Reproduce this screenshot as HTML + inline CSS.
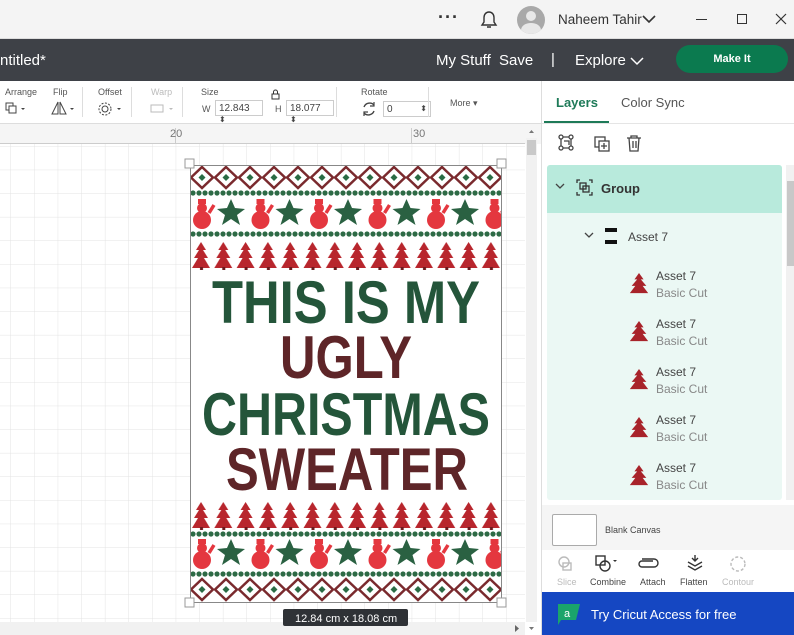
<!DOCTYPE html>
<html><head><meta charset="utf-8"><style>
*{margin:0;padding:0;box-sizing:border-box}
body{width:794px;height:635px;overflow:hidden;position:relative;font-family:"Liberation Sans",sans-serif;background:#fff;color:#333}
.abs{position:absolute}
.top{left:0;top:0;width:794px;height:39px;background:#f4f4f4;border-bottom:1px solid #ddd}
.hdr{left:0;top:39px;width:794px;height:42px;background:#3e4147;color:#fff}
.tb{left:0;top:81px;width:541px;height:43px;background:#fff;border-bottom:1px solid #ddd;font-size:9px;color:#555}
.lbl{position:absolute;font-size:9px;color:#555}
.inp{position:absolute;border:1px solid #ccc;height:16px;font-size:10px;padding:2px 3px;color:#444;background:#fff}
.rp{left:541px;top:81px;width:253px;height:554px;background:#fff;border-left:1px solid #ddd}
.an{position:absolute;left:114px;font-size:12px;color:#444;line-height:17px}
.an span{color:#888}
</style></head><body>
<div class="abs top">
 <div class="abs" style="left:438px;top:10px;font-size:18px;font-weight:bold;letter-spacing:1px;color:#333;line-height:14px">···</div>
 <svg class="abs" style="left:480px;top:10px" width="18" height="20" viewBox="0 0 18 20"><path d="M9 2c-3 0-5 2.5-5 5.5V12l-2 3h14l-2-3V7.5C14 4.5 12 2 9 2z M7 17h4" fill="none" stroke="#333" stroke-width="1.4"/></svg>
 <div class="abs" style="left:517px;top:6px;width:28px;height:28px;border-radius:50%;background:#a9a9a9;overflow:hidden"><div class="abs" style="left:9px;top:5px;width:10px;height:10px;border-radius:50%;background:#e8e8e8"></div><div class="abs" style="left:4px;top:17px;width:20px;height:14px;border-radius:50%;background:#e8e8e8"></div></div>
 <div class="abs" style="left:558px;top:12px;font-size:13.5px;color:#333">Naheem Tahir</div>
 <svg class="abs" style="left:642px;top:14px" width="14" height="10"><path d="M1 2l6 6 6-6" fill="none" stroke="#333" stroke-width="1.6"/></svg>
 <div class="abs" style="left:696px;top:19px;width:11px;height:1px;background:#333"></div>
 <div class="abs" style="left:737px;top:14px;width:10px;height:10px;border:1px solid #333"></div>
 <svg class="abs" style="left:775px;top:13px" width="12" height="12"><path d="M1 1l10 10M11 1L1 11" stroke="#333" stroke-width="1.2"/></svg>
</div>
<div class="abs hdr">
 <div class="abs" style="left:0;top:13px;font-size:15px">ntitled*</div>
 <div class="abs" style="left:436px;top:13px;font-size:15px">My Stuff</div>
 <div class="abs" style="left:499px;top:13px;font-size:15px">Save</div>
 <div class="abs" style="left:551px;top:12px;font-size:15px">|</div>
 <div class="abs" style="left:575px;top:13px;font-size:15px">Explore</div>
 <svg class="abs" style="left:630px;top:17px" width="14" height="10"><path d="M1 2l6 6 6-6" fill="none" stroke="#fff" stroke-width="1.5"/></svg>
 <div class="abs" style="left:676px;top:6px;width:112px;height:28px;border-radius:14px;background:#0b7a4f;font-size:11px;font-weight:bold;text-align:center;line-height:28px">Make It</div>
</div>
<div class="abs tb">
 <div class="lbl" style="left:5px;top:6px">Arrange</div>
 <div class="lbl" style="left:53px;top:6px">Flip</div>
 <div class="lbl" style="left:98px;top:6px">Offset</div>
 <div class="lbl" style="left:151px;top:6px;color:#bbb">Warp</div>
 <div class="lbl" style="left:201px;top:6px">Size</div>
 <div class="lbl" style="left:361px;top:6px">Rotate</div>
 <div class="lbl" style="left:450px;top:17px">More ▾</div>
 <svg class="abs" style="left:5px;top:21px" width="24" height="14"><rect x="1" y="1" width="7" height="7" fill="none" stroke="#444"/><rect x="4" y="4" width="7" height="7" fill="#fff" stroke="#444"/><path d="M16 6l2 2 2-2z" fill="#444"/></svg>
 <svg class="abs" style="left:51px;top:20px" width="24" height="15"><path d="M7 1L1 13h6zM9 1l6 12H9z" fill="none" stroke="#444"/><path d="M19 7l2 2 2-2z" fill="#444"/></svg>
 <svg class="abs" style="left:97px;top:20px" width="26" height="16"><circle cx="8" cy="8" r="6" fill="none" stroke="#444" stroke-dasharray="2 1.5"/><circle cx="8" cy="8" r="3" fill="none" stroke="#444"/><path d="M20 7l2 2 2-2z" fill="#444"/></svg>
 <svg class="abs" style="left:150px;top:22px" width="26" height="12"><rect x="1" y="2" width="12" height="7" fill="none" stroke="#bbb"/><path d="M19 5l2 2 2-2z" fill="#bbb"/></svg>
 <div class="lbl" style="left:202px;top:23px">W</div>
 <div class="inp" style="left:215px;top:19px;width:48px">12.843 <span style="font-size:8px">⬍</span></div>
 <div class="lbl" style="left:275px;top:23px">H</div>
 <div class="inp" style="left:286px;top:19px;width:48px">18.077 <span style="font-size:8px">⬍</span></div>
 <svg class="abs" style="left:270px;top:8px" width="12" height="11"><rect x="2" y="5" width="7" height="5" fill="none" stroke="#333"/><path d="M3.5 5V3a2 2 0 014 0v2" fill="none" stroke="#333"/></svg>
 <svg class="abs" style="left:361px;top:20px" width="16" height="16"><path d="M3 6a6 6 0 0110-2M13 10a6 6 0 01-10 2" fill="none" stroke="#444" stroke-width="1.4"/><path d="M13 1v4h-4M3 15v-4h4" fill="none" stroke="#444" stroke-width="1.2"/></svg>
 <div class="inp" style="left:383px;top:20px;width:48px">0 <span style="float:right;font-size:8px">⬍</span></div>
 <div class="abs" style="left:82px;top:6px;width:1px;height:30px;background:#ddd"></div>
 <div class="abs" style="left:131px;top:6px;width:1px;height:30px;background:#ddd"></div>
 <div class="abs" style="left:182px;top:6px;width:1px;height:30px;background:#ddd"></div>
 <div class="abs" style="left:336px;top:6px;width:1px;height:30px;background:#ddd"></div>
 <div class="abs" style="left:428px;top:6px;width:1px;height:30px;background:#ddd"></div>
</div>
<svg class="abs" style="left:0;top:124px" width="541" height="511" viewBox="0 124 541 511">
 <defs>
  <pattern id="grid" x="11" y="5" width="23.6" height="23.6" patternUnits="userSpaceOnUse"><path d="M23.6 0V23.6H0" fill="none" stroke="#e3e3e3" stroke-width="1"/></pattern>
  <pattern id="dia" x="0" y="0" width="24" height="25" patternUnits="userSpaceOnUse"><path d="M12 2L23 12.5 12 23 1 12.5z" fill="none" stroke="#7a2a2e" stroke-width="2.5"/><path d="M12 9l3.5 3.5L12 16l-3.5-3.5z" fill="#2a6b44"/></pattern>
  <pattern id="dot" x="0" y="0" width="6" height="6" patternUnits="userSpaceOnUse"><circle cx="3" cy="3" r="2.6" fill="#2d6a45"/></pattern>
  <pattern id="snow" x="0" y="0" width="58.5" height="34" patternUnits="userSpaceOnUse">
   <circle cx="12" cy="23" r="9" fill="#e4373f"/><circle cx="12" cy="11" r="5" fill="#e4373f"/><rect x="8" y="2" width="8" height="5" fill="#e4373f"/><path d="M19 16l5-8" stroke="#e4373f" stroke-width="3.5"/>
   <path d="M41 2l4 9 10 1-8 6 3 10-9-6-9 6 3-10-8-6 10-1z" fill="#2a6142"/>
  </pattern>
  <pattern id="tree" x="0" y="0" width="22.3" height="31" patternUnits="userSpaceOnUse"><path d="M11 2L6 10h3L4 18h4L2 28h18l-6-10h4l-5-8h3z" fill="#b8262d"/><rect x="10" y="27" width="3" height="3" fill="#6b1a1e"/></pattern>
 </defs>
 <rect x="0" y="124" width="541" height="20" fill="#f5f5f5"/>
 <rect x="0" y="144" width="541" height="491" fill="#fff"/>
 <rect x="0" y="144" width="525" height="478" fill="url(#grid)"/>
 <g stroke="#ccc"><path d="M0 143.5H525"/><path d="M175.5 128V144M411.5 128V144"/></g>
 <text x="170" y="137" font-size="11" fill="#777">20</text><text x="413" y="137" font-size="11" fill="#777">30</text>
 <rect x="526" y="138" width="11" height="484" fill="#f1f1f1"/><rect x="527" y="140" width="9" height="15" fill="#c9c9c9"/>
 <path d="M529 133l2.5-3 2.5 3z M529 627l2.5 3 2.5-3z" fill="#777"/>
 <rect x="0" y="622" width="525" height="13" fill="#f1f1f1"/><path d="M515 625l4 3.5-4 3.5z" fill="#666"/>
 <rect x="190" y="165" width="312" height="437" fill="#fff"/>
 <g transform="translate(190,165)"><rect width="312" height="25" fill="url(#dia)"/></g>
 <g transform="translate(190,190)"><rect width="312" height="6" fill="url(#dot)"/></g>
 <g transform="translate(190,197)"><rect width="312" height="34" fill="url(#snow)"/></g>
 <g transform="translate(190,231)"><rect width="312" height="6" fill="url(#dot)"/></g>
 <g transform="translate(190,240)"><rect width="312" height="31" fill="url(#tree)"/></g>
 <g font-family="Liberation Sans, sans-serif" font-weight="bold">
  <text x="212" y="323" font-size="60" textLength="268" lengthAdjust="spacingAndGlyphs" fill="#24553a">THIS IS MY</text>
  <text x="280" y="378" font-size="60" textLength="132" lengthAdjust="spacingAndGlyphs" fill="#5e2528">UGLY</text>
  <text x="202" y="435" font-size="60" textLength="288" lengthAdjust="spacingAndGlyphs" fill="#24553a">CHRISTMAS</text>
  <text x="226" y="490" font-size="60" textLength="242" lengthAdjust="spacingAndGlyphs" fill="#5e2528">SWEATER</text>
 </g>
 <g transform="translate(190,500)"><rect width="312" height="31" fill="url(#tree)"/></g>
 <g transform="translate(190,531)"><rect width="312" height="6" fill="url(#dot)"/></g>
 <g transform="translate(190,537)"><rect width="312" height="34" fill="url(#snow)"/></g>
 <g transform="translate(190,571)"><rect width="312" height="6" fill="url(#dot)"/></g>
 <g transform="translate(190,577)"><rect width="312" height="25" fill="url(#dia)"/></g>
 <rect x="190.5" y="165.5" width="311" height="437" fill="none" stroke="#888"/>
 <g fill="#fff" stroke="#999"><rect x="185" y="159" width="9" height="9"/><rect x="497" y="159" width="9" height="9"/><rect x="185" y="598" width="9" height="9"/><rect x="497" y="598" width="9" height="9"/></g>
 <rect x="283" y="609" width="125" height="17" rx="2" fill="#2f3236"/>
 <text x="295" y="622" font-size="11" fill="#fff">12.84  cm x 18.08  cm</text>
</svg>
<div class="abs rp">
 <div class="abs" style="left:14px;top:14px;font-size:13px;color:#1e7a58;font-weight:bold">Layers</div>
 <div class="abs" style="left:2px;top:40px;width:65px;height:2px;background:#1e7a58"></div>
 <div class="abs" style="left:79px;top:14px;font-size:13px;color:#555">Color Sync</div>
 <div class="abs" style="left:0;top:42px;width:253px;height:1px;background:#e5e5e5"></div>
 <svg class="abs" style="left:16px;top:53px" width="100" height="20"><g fill="none" stroke="#444" stroke-width="1.3"><circle cx="3" cy="3" r="2"/><circle cx="13" cy="3" r="2"/><circle cx="3" cy="14" r="2"/><circle cx="13" cy="14" r="2"/><path d="M5 3h6M5 14h6M3 5v7M13 5v7M6 7h5v4"/><rect x="37" y="3" width="10" height="10"/><rect x="41" y="7" width="10" height="10" fill="#fff"/><path d="M46 9v6M43 12h6"/><path d="M69 4h14M73 4V2h6v2M71 4l1 13h8l1-13M75 7v7M78 7v7"/></g></svg>
 <div class="abs" style="left:5px;top:84px;width:235px;height:335px;background:#ebf8f4;border-radius:3px"></div>
 <div class="abs" style="left:5px;top:84px;width:235px;height:48px;background:#b8eadc;border-radius:3px 3px 0 0"></div>
 <svg class="abs" style="left:13px;top:102px" width="10" height="7"><path d="M1 1l4 4 4-4" fill="none" stroke="#444" stroke-width="1.3"/></svg>
 <svg class="abs" style="left:34px;top:98px" width="17" height="17"><g fill="none" stroke="#333" stroke-width="1.3"><path d="M1 4V1h3M13 1h3v3M16 13v3h-3M4 16H1v-3"/><rect x="4" y="4" width="6" height="6"/><rect x="7" y="7" width="6" height="6"/></g></svg>
 <div class="abs" style="left:59px;top:100px;font-size:13px;font-weight:bold;color:#333">Group</div>
 <svg class="abs" style="left:42px;top:151px" width="10" height="7"><path d="M1 1l4 4 4-4" fill="none" stroke="#444" stroke-width="1.3"/></svg>
 <div class="abs" style="left:63px;top:147px;width:12px;height:4px;background:#111"></div>
 <div class="abs" style="left:63px;top:159px;width:12px;height:4px;background:#111"></div>
 <div class="abs" style="left:86px;top:149px;font-size:12px;color:#444">Asset 7</div>
 <svg width="0" height="0" style="position:absolute"><defs><symbol id="t" viewBox="0 0 20 24"><path d="M10 0L5 7h3L2 14h4L0 22h20l-6-8h4l-6-7h3z" fill="#a8232a"/></symbol></defs></svg>
 <svg class="abs" style="left:87px;top:192px" width="20" height="22"><use href="#t"/></svg><div class="an" style="top:187px">Asset 7<br><span>Basic Cut</span></div>
 <svg class="abs" style="left:87px;top:240px" width="20" height="22"><use href="#t"/></svg><div class="an" style="top:235px">Asset 7<br><span>Basic Cut</span></div>
 <svg class="abs" style="left:87px;top:288px" width="20" height="22"><use href="#t"/></svg><div class="an" style="top:283px">Asset 7<br><span>Basic Cut</span></div>
 <svg class="abs" style="left:87px;top:336px" width="20" height="22"><use href="#t"/></svg><div class="an" style="top:331px">Asset 7<br><span>Basic Cut</span></div>
 <svg class="abs" style="left:87px;top:384px" width="20" height="22"><use href="#t"/></svg><div class="an" style="top:379px">Asset 7<br><span>Basic Cut</span></div>
 <div class="abs" style="left:244px;top:84px;width:9px;height:335px;background:#f1f1f1"></div>
 <div class="abs" style="left:245px;top:100px;width:7px;height:85px;background:#c8c8c8"></div>
 <div class="abs" style="left:0;top:424px;width:253px;height:45px;background:#f5f5f5"></div>
 <div class="abs" style="left:10px;top:433px;width:45px;height:32px;background:#fff;border:1px solid #aaa;border-radius:2px"></div>
 <div class="abs" style="left:63px;top:444px;font-size:9px;color:#444">Blank Canvas</div>
 <svg class="abs" style="left:0;top:472px" width="253" height="40"><g fill="none" stroke-width="1.4"><g stroke="#bbb"><circle cx="22" cy="9" r="5"/><rect x="21" y="10" width="8" height="7"/></g><g stroke="#333"><rect x="54" y="3" width="9" height="9"/><circle cx="63" cy="13" r="5"/><path d="M100 6h12a4 4 0 010 8h-12a3 3 0 010-6h11"/><path d="M153 2v6M150 5l3 3 3-3M146 9l7 4 7-4M146 13l7 4 7-4"/></g><circle cx="196" cy="11" r="7" stroke="#bbb" stroke-dasharray="3 2"/></g><path d="M71 7l2 2 2-2z" fill="#333"/>
  <g font-size="9" font-family="Liberation Sans,sans-serif"><text x="15" y="32" fill="#bbb">Slice</text><text x="48" y="32" fill="#444">Combine</text><text x="98" y="32" fill="#444">Attach</text><text x="138" y="32" fill="#444">Flatten</text><text x="180" y="32" fill="#bbb">Contour</text></g></svg>
 <div class="abs" style="left:0;top:511px;width:253px;height:43px;background:#1547c2"></div>
 <svg class="abs" style="left:14px;top:522px" width="26" height="24"><path d="M2 1h22l-4 16H5l-3 5z" fill="#1aa46b"/><text x="8" y="14" font-size="11" fill="#fff" font-family="Liberation Sans,sans-serif">a</text></svg>
 <div class="abs" style="left:49px;top:526px;font-size:13px;color:#fff">Try Cricut Access for free</div>
</div>
</body></html>
